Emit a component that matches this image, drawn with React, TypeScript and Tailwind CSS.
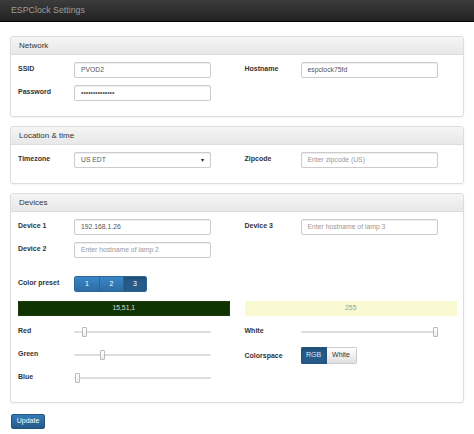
import React from "react";

const font = { fontFamily: '"Liberation Sans", Arial, Helvetica, sans-serif' };

function Panel({ title, children, pb = "pb-[15px]" }: { title: string; children: React.ReactNode; pb?: string }) {
  return (
    <div className="mb-[9px] rounded-[3px] border border-[#dddddd] bg-white shadow-[0_1px_2px_rgba(0,0,0,0.05)]">
      <div className="flex h-[18px] items-center rounded-t-[3px] border-b border-[#dddddd] bg-gradient-to-b from-[#f5f5f5] to-[#e8e8e8] px-[8px] text-[8px] text-[#333333]">
        {title}
      </div>
      <div className={`px-[7px] pt-[7px] ${pb}`}>{children}</div>
    </div>
  );
}

function Label({ children }: { children: React.ReactNode }) {
  return (
    <div className="w-[56px] shrink-0 pt-[2px] text-[7px] leading-[9px] font-bold text-[#333333]">{children}</div>
  );
}

function TextInput({ value, placeholder }: { value?: string; placeholder?: string }) {
  return (
    <div className="flex h-[16px] w-[137px] items-center rounded-[2px] border border-[#cccccc] bg-white px-[6px] text-[6.8px] shadow-[inset_0_1px_1px_rgba(0,0,0,0.075)]">
      {value ? <span className="text-[#555555]">{value}</span> : <span className="text-[#999999]">{placeholder}</span>}
    </div>
  );
}

function Row({ label, children }: { label: string; children: React.ReactNode }) {
  return (
    <div className="flex items-start">
      <Label>{label}</Label>
      {children}
    </div>
  );
}

function Slider({ value }: { value: number }) {
  const pct = value / 255;
  return (
    <div className="relative h-[16px] w-[137px]">
      <div className="absolute left-0 right-0 top-[7px] h-[2px] rounded-full bg-[#dddddd]" />
      <div
        className="absolute top-[3px] h-[10px] w-[5px] rounded-[1px] border border-[#bbbbbb] bg-gradient-to-b from-[#ffffff] to-[#eeeeee]"
        style={{ left: `${Math.round(pct * 132)}px` }}
      />
    </div>
  );
}

export default function App() {
  return (
    <div style={font} className="min-h-[434px] w-[474px] bg-white">
      <nav className="flex h-[22px] items-center border-b border-[#080808] bg-gradient-to-b from-[#3c3c3c] to-[#222222] px-[11px]">
        <span className="text-[8.8px] text-[#9d9d9d]">ESPClock Settings</span>
      </nav>
      <div className="px-[10px] pt-[14px]">
        <Panel title="Network">
          <div className="grid grid-cols-2 gap-x-[15px]">
            <div className="flex flex-col gap-[7px]">
              <Row label="SSID"><TextInput value="PVOD2" /></Row>
              <Row label="Password"><TextInput value="••••••••••••••" /></Row>
            </div>
            <div className="flex flex-col gap-[7px]">
              <Row label="Hostname"><TextInput value="espclock75fd" /></Row>
            </div>
          </div>
        </Panel>

        <Panel title="Location & time">
          <div className="grid grid-cols-2 gap-x-[15px]">
            <Row label="Timezone">
              <div className="flex h-[16px] w-[137px] items-center justify-between rounded-[2px] border border-[#cccccc] bg-white px-[6px] text-[6.8px] text-[#555555] shadow-[inset_0_1px_1px_rgba(0,0,0,0.075)]">
                <span>US EDT</span>
                <span className="text-[6px] text-[#222222]">▾</span>
              </div>
            </Row>
            <Row label="Zipcode"><TextInput placeholder="Enter zipcode (US)" /></Row>
          </div>
        </Panel>

        <Panel title="Devices" pb="pb-[16px]">
          <div className="grid grid-cols-2 gap-x-[15px]">
            <div className="flex flex-col gap-[7px]">
              <Row label="Device 1"><TextInput value="192.168.1.26" /></Row>
              <Row label="Device 2"><TextInput placeholder="Enter hostname of lamp 2" /></Row>
            </div>
            <div className="flex flex-col gap-[7px]">
              <Row label="Device 3"><TextInput placeholder="Enter hostname of lamp 3" /></Row>
            </div>
          </div>

          <div className="mt-[18px] flex items-start">
            <Label>Color preset</Label>
            <div className="flex h-[16px] overflow-hidden rounded-[2px] border border-[#2b669a] text-[7px] text-white">
              <div className="flex w-[24px] items-center justify-center bg-gradient-to-b from-[#3a86c8] to-[#2d6ca2]">1</div>
              <div className="flex w-[24px] items-center justify-center border-l border-[#2b669a] bg-gradient-to-b from-[#3a86c8] to-[#2d6ca2]">2</div>
              <div className="flex w-[23px] items-center justify-center border-l border-[#2b669a] bg-[#265a88] shadow-[inset_0_2px_3px_rgba(0,0,0,0.15)]">3</div>
            </div>
          </div>

          <div className="mt-[9px] grid grid-cols-2 gap-x-[15px]">
            <div className="flex h-[15px] items-center justify-center border border-[#1c3a10] bg-[rgb(15,51,1)] text-[6.8px] text-[#dddddd]">
              15,51,1
            </div>
            <div className="mr-[-1px] flex h-[15px] items-center justify-center bg-[#fafad2] text-[6.8px] text-[#999999]">
              255
            </div>
          </div>

          <div className="mt-[8px] grid grid-cols-2 gap-x-[15px]">
            <div className="flex flex-col gap-[7px]">
              <Row label="Red"><Slider value={15} /></Row>
              <Row label="Green"><Slider value={51} /></Row>
              <Row label="Blue"><Slider value={1} /></Row>
            </div>
            <div className="flex flex-col gap-[7px]">
              <Row label="White"><Slider value={255} /></Row>
              <div className="flex items-start">
                <div className="w-[56px] shrink-0 pt-[4px] text-[7px] leading-[9px] font-bold text-[#333333]">Colorspace</div>
                <div className="flex h-[17px] overflow-hidden rounded-[2px] text-[7px]">
                  <div className="flex w-[26px] items-center justify-center border border-[#245580] bg-[#265a88] text-[#dbe7f3] shadow-[inset_0_2px_3px_rgba(0,0,0,0.15)]">RGB</div>
                  <div className="flex w-[30px] items-center justify-center border border-l-0 border-[#cccccc] bg-gradient-to-b from-[#ffffff] to-[#e0e0e0] text-[#333333]">White</div>
                </div>
              </div>
            </div>
          </div>
        </Panel>

        <div className="mt-[11px] ml-[1px] flex h-[15px] w-[34px] items-center justify-center rounded-[2px] border border-[#245580] bg-gradient-to-b from-[#337ab7] to-[#265a88] text-[7px] text-white">
          Update
        </div>
      </div>
    </div>
  );
}
